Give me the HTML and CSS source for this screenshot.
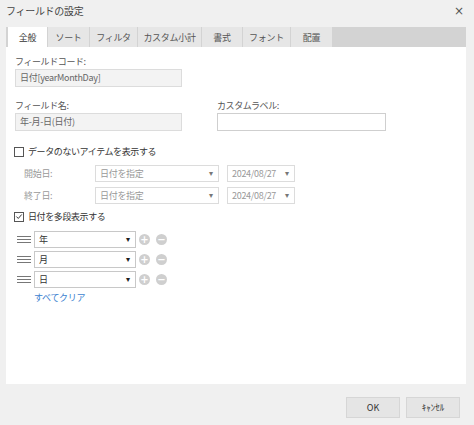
FILE: index.html
```html
<!DOCTYPE html>
<html lang="ja">
<head>
<meta charset="utf-8">
<link rel="stylesheet" href="styles.css">
</head>
<body>
<div class="dialog">
  <div class="titlebar">
    <span class="title">フィールドの設定</span>
    <span class="close">×</span>
  </div>
  <div class="tabs">
    <div class="tab active" style="width:40px">全般</div>
    <div class="tab" style="width:42px">ソート</div>
    <div class="tab" style="width:48px">フィルタ</div>
    <div class="tab" style="width:64px">カスタム小計</div>
    <div class="tab" style="width:41px">書式</div>
    <div class="tab" style="width:48px">フォント</div>
    <div class="tab" style="width:42px">配置</div>
  </div>
  <div class="panel">
    <div class="label l-code">フィールドコード:</div>
    <div class="input ro w167">日付[yearMonthDay]</div>
    <div class="row2">
      <div class="col">
        <div class="label">フィールド名:</div>
        <div class="input ro w167">年-月-日(日付)</div>
      </div>
      <div class="col col2">
        <div class="label">カスタムラベル:</div>
        <div class="input w168"></div>
      </div>
    </div>
    <div class="check c1"><span class="box"></span>データのないアイテムを表示する</div>
    <div class="daterow dr1">
      <span class="dlabel">開始日:</span>
      <div class="select dis s123"><span class="st">日付を指定</span><span class="arr">▾</span></div>
      <div class="select dis s67"><span class="st">2024/08/27</span><span class="arr">▾</span></div>
    </div>
    <div class="daterow">
      <span class="dlabel">終了日:</span>
      <div class="select dis s123"><span class="st">日付を指定</span><span class="arr">▾</span></div>
      <div class="select dis s67"><span class="st">2024/08/27</span><span class="arr">▾</span></div>
    </div>
    <div class="check c2"><span class="box checked"><svg width="9" height="9" viewBox="0 0 9 9"><path d="M1.5 4.5 L3.7 6.7 L7.6 2.2" fill="none" stroke="#333" stroke-width="1.1"/></svg></span>日付を多段表示する</div>
    <div class="multi">
      <div class="mrow">
        <span class="handle"><i></i><i></i><i></i></span>
        <div class="select s101"><span class="st dark">年</span><span class="arr dark">▾</span></div>
        <span class="circ">+</span><span class="circ">−</span>
      </div>
      <div class="mrow">
        <span class="handle"><i></i><i></i><i></i></span>
        <div class="select s101"><span class="st dark">月</span><span class="arr dark">▾</span></div>
        <span class="circ">+</span><span class="circ">−</span>
      </div>
      <div class="mrow">
        <span class="handle"><i></i><i></i><i></i></span>
        <div class="select s101"><span class="st dark">日</span><span class="arr dark">▾</span></div>
        <span class="circ">+</span><span class="circ">−</span>
      </div>
      <div class="clear">すべてクリア</div>
    </div>
  </div>
  <div class="footer">
    <div class="btn">OK</div>
    <div class="btn">ｷｬﾝｾﾙ</div>
  </div>
</div>
</body>
</html>
```
FILE: styles.css
```css
html, body {
  margin: 0;
  padding: 0;
}
body {
  width: 474px;
  height: 425px;
  background: #f0f0f0;
  font-family: "Noto Sans CJK JP", "Noto Sans", sans-serif;
  font-size: 9px;
  color: #333;
  overflow: hidden;
}
.dialog {
  width: 474px;
  height: 425px;
  display: flex;
  flex-direction: column;
}
.titlebar {
  height: 27px;
  display: flex;
  align-items: center;
  justify-content: space-between;
  padding: 0 10px 0 6px;
  box-sizing: border-box;
}
.title {
  font-size: 10px;
  color: #444;
  letter-spacing: -0.3px;
  margin-top: -6px;
}
.close {
  font-family: "DejaVu Sans", sans-serif;
  font-size: 12px;
  color: #555;
  margin-top: -6px;
}
.tabs {
  margin: 0 8px 0 6px;
  height: 20px;
  background: #d3d3d3;
  display: flex;
  padding-left: 2px;
}
.tab {
  flex: none;
  height: 20px;
  box-sizing: border-box;
  background: #e6e6e6;
  border-right: 1px solid #d3d3d3;
  display: flex;
  align-items: center;
  justify-content: center;
  font-size: 9px;
  color: #555;
  letter-spacing: -0.3px;
}
.tab.active {
  background: #fff;
  color: #333;
}
.panel {
  margin: 0 8px 0 6px;
  height: 337px;
  background: #fff;
  box-sizing: border-box;
  padding: 8px 0 0 9px;
}
.label {
  font-size: 9px;
  color: #555;
  letter-spacing: -0.4px;
  height: 13px;
  line-height: 13px;
  margin-bottom: 1px;
}
.input {
  height: 18px;
  box-sizing: border-box;
  border: 1px solid #dcdcdc;
  background: #fff;
  font-size: 9px;
  color: #666;
  line-height: 16px;
  padding-left: 4px;
  letter-spacing: -0.3px;
}
.input.ro {
  background: #f3f3f3;
}
.w167 { width: 167px; }
.w168 { width: 169px; border-color: #cfcfcf; }
.row2 {
  display: flex;
  margin-top: 12px;
}
.col2 {
  margin-left: 35px;
}
.check {
  display: flex;
  align-items: center;
  height: 13px;
  font-size: 9px;
  color: #333;
  letter-spacing: -0.4px;
}
.c1 { margin-top: 14px; margin-left: -1px; }
.c2 { margin-top: 6px; margin-left: -1px; }
.box {
  width: 10px;
  height: 10px;
  box-sizing: border-box;
  border: 1px solid #555;
  background: #fff;
  margin-right: 4px;
  display: flex;
  align-items: center;
  justify-content: center;
}
.box svg { display: block; }
.daterow {
  display: flex;
  align-items: center;
  height: 17px;
  margin-top: 5px;
}
.dr1 { margin-top: 7px; }
.dlabel {
  flex: none;
  width: 80px;
  padding-left: 9px;
  box-sizing: border-box;
  font-size: 9px;
  color: #999;
  letter-spacing: -0.3px;
}
.select {
  flex: none;
  height: 17px;
  box-sizing: border-box;
  border: 1px solid #dcdcdc;
  background: #fff;
  display: flex;
  align-items: center;
  margin-right: 8px;
}
.st {
  flex: 1;
  padding-left: 4px;
  font-size: 9px;
  color: #999;
  letter-spacing: -0.3px;
  white-space: nowrap;
}
.st.dark { color: #333; }
.arr {
  flex: none;
  width: 14px;
  height: 100%;
  display: flex;
  align-items: center;
  justify-content: center;
  font-family: "DejaVu Sans", sans-serif;
  font-size: 8px;
  color: #777;
}
.arr.dark { color: #222; }
.s123 { width: 124px; }
.s67 { width: 68px; }
.s101 { width: 102px; margin-right: 3px; border-color: #c8c8c8; }
.multi {
  margin-top: 8px;
}
.mrow {
  display: flex;
  align-items: center;
  height: 17px;
  margin-bottom: 3px;
}
.handle {
  flex: none;
  width: 14px;
  margin-left: 2px;
  margin-right: 3px;
  display: flex;
  flex-direction: column;
  gap: 2px;
}
.handle i {
  display: block;
  height: 1px;
  background: #777;
}
.circ {
  flex: none;
  width: 11px;
  height: 11px;
  border-radius: 50%;
  background: #cfcfcf;
  color: #fff;
  font-family: "DejaVu Sans", sans-serif;
  font-size: 10px;
  font-weight: bold;
  line-height: 11px;
  text-align: center;
  margin-right: 6px;
}
.clear {
  margin-left: 19px;
  margin-top: 2px;
  font-size: 9px;
  color: #3c7fd0;
  letter-spacing: -0.3px;
}
.footer {
  flex: 1;
  display: flex;
  justify-content: flex-end;
  align-items: center;
  gap: 6px;
  padding-right: 14px;
  padding-top: 6px;
}
.btn {
  width: 54px;
  height: 21px;
  box-sizing: border-box;
  border: 1px solid #d6d6d6;
  background: #e5e5e5;
  display: flex;
  align-items: center;
  justify-content: center;
  font-size: 9px;
  color: #333;
}
```
